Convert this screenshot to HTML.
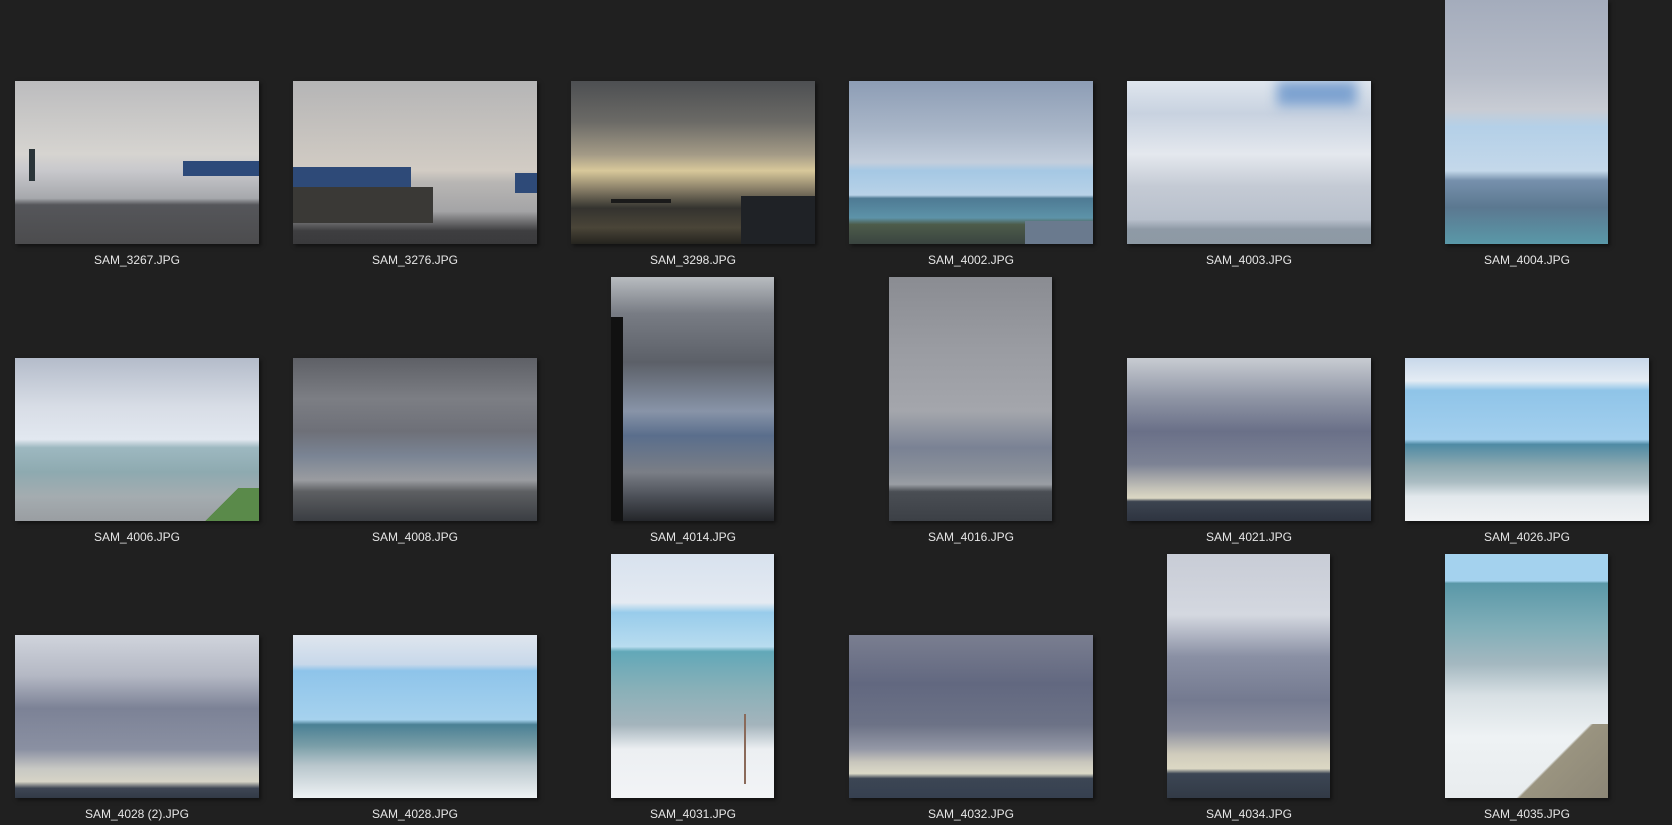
<!DOCTYPE html>
<html><head><meta charset="utf-8"><style>
html,body{margin:0;padding:0;background:#202020;width:1672px;height:825px;overflow:hidden;position:relative}
.t{position:absolute;box-shadow:2px 2px 4px rgba(0,0,0,.5);overflow:hidden}
.L{width:244px;height:163px}
.P{width:163px;height:244px}
.l{position:absolute;width:244px;text-align:center;font:12px "Liberation Sans",sans-serif;color:#e6e6e6;line-height:14px}
.t div{position:absolute}
</style></head><body>

<!-- Row 1 -->
<div class="t L" style="left:15px;top:81px;background:linear-gradient(#bcbcbe 0%,#d6d4d0 45%,#c8c8cc 55%,#a6a8ac 72%,#55565a 76%,#4c4c4e 100%)">
 <div style="left:168px;top:80px;width:76px;height:15px;background:#2d4a7a"></div>
 <div style="left:14px;top:68px;width:6px;height:32px;background:#2a3438"></div>
</div>
<div class="t L" style="left:293px;top:81px;background:linear-gradient(#b5b5b6 0%,#d2ccc4 55%,#b8b6b4 62%,#a4a4a6 80%,#3e3e40 92%,#3a3a3c 100%)">
 <div style="left:0;top:86px;width:118px;height:20px;background:#2e4a78"></div>
 <div style="left:0;top:106px;width:140px;height:36px;background:#3a3936"></div>
 <div style="left:222px;top:92px;width:22px;height:20px;background:#2e4a78"></div>
</div>
<div class="t L" style="left:571px;top:81px;background:linear-gradient(#4d4f52 0%,#6b6a66 25%,#a39a86 45%,#d8c89a 55%,#7d7460 68%,#34332f 78%,#4a4538 90%,#25241f 100%)">
 <div style="left:170px;top:115px;width:74px;height:48px;background:#1f2226"></div>
 <div style="left:40px;top:118px;width:60px;height:4px;background:#1a1a1a"></div>
</div>
<div class="t L" style="left:849px;top:81px;background:linear-gradient(#8d9db5 0%,#a9b6c8 30%,#c3cedc 50%,#a5c8e4 55%,#b8d2e8 70%,#4e7a94 72%,#5d93a8 84%,#4d5c4a 88%,#3a4440 100%)">
 <div style="left:176px;top:140px;width:68px;height:23px;background:#6a7a8e"></div>
</div>
<div class="t L" style="left:1127px;top:81px;background:linear-gradient(#dfe6ee 0%,#c8d2e0 20%,#e4e8ee 45%,#c4cad4 65%,#b8c0cc 85%,#8f9aa6 91%,#8d99a4 100%)">
 <div style="left:150px;top:0;width:80px;height:25px;background:#7da2d0;filter:blur(6px)"></div>
</div>
<div class="t P" style="left:1445px;top:0px;background:linear-gradient(#a4acbc 0%,#b6bcc8 30%,#c8ccd4 45%,#b4d0e8 52%,#c4d8ea 70%,#7690ac 74%,#5b7890 85%,#5a98a8 100%)"></div>

<div class="l" style="left:15px;top:253px">SAM_3267.JPG</div>
<div class="l" style="left:293px;top:253px">SAM_3276.JPG</div>
<div class="l" style="left:571px;top:253px">SAM_3298.JPG</div>
<div class="l" style="left:849px;top:253px">SAM_4002.JPG</div>
<div class="l" style="left:1127px;top:253px">SAM_4003.JPG</div>
<div class="l" style="left:1405px;top:253px">SAM_4004.JPG</div>

<!-- Row 2 -->
<div class="t L" style="left:15px;top:358px;background:linear-gradient(#b4bcca 0%,#d8dde6 30%,#e2e8f0 50%,#9db8c0 55%,#8eaab0 70%,#a4acb0 85%,#9a9ea2 100%)">
 <div style="left:170px;top:130px;width:74px;height:33px;background:linear-gradient(135deg,transparent 50%,#5a8a4a 50%)"></div>
</div>
<div class="t L" style="left:293px;top:358px;background:linear-gradient(#5e6066 0%,#7c7e84 25%,#6e7078 45%,#7a8494 60%,#9a9ca0 75%,#5d5f62 82%,#3a3d42 100%)"></div>
<div class="t P" style="left:611px;top:277px;background:linear-gradient(#b8bcc0 0%,#787c84 15%,#5c6068 35%,#8894a8 55%,#5a6e8c 65%,#7a7e86 80%,#4c5058 90%,#24262a 100%)">
 <div style="left:0;top:40px;width:12px;height:204px;background:#111"></div>
</div>
<div class="t P" style="left:889px;top:277px;background:linear-gradient(#8a8c92 0%,#9a9ca2 30%,#a4a6ac 55%,#7a8294 70%,#8a909a 80%,#9a9ea4 85%,#4a4e54 88%,#3c4046 100%)"></div>
<div class="t L" style="left:1127px;top:358px;background:linear-gradient(#c8ccd2 0%,#8e94a4 25%,#6a7088 45%,#7c8294 65%,#c4c2b8 80%,#dcd8c4 86%,#3c4450 88%,#2e3440 100%)"></div>
<div class="t L" style="left:1405px;top:358px;background:linear-gradient(#c8d8ea 0%,#e4ecf4 14%,#8fc4e8 20%,#a4d0ee 50%,#4e8aa4 53%,#8ca8b0 66%,#aabcc2 76%,#e2e8ec 85%,#f0f2f4 100%)"></div>

<div class="l" style="left:15px;top:530px">SAM_4006.JPG</div>
<div class="l" style="left:293px;top:530px">SAM_4008.JPG</div>
<div class="l" style="left:571px;top:530px">SAM_4014.JPG</div>
<div class="l" style="left:849px;top:530px">SAM_4016.JPG</div>
<div class="l" style="left:1127px;top:530px">SAM_4021.JPG</div>
<div class="l" style="left:1405px;top:530px">SAM_4026.JPG</div>

<!-- Row 3 -->
<div class="t L" style="left:15px;top:635px;background:linear-gradient(#d0d4dc 0%,#b4b8c4 25%,#7c8296 45%,#8a90a2 70%,#c8c8c4 82%,#d6d4c6 90%,#3e4654 94%,#323a46 100%)"></div>
<div class="t L" style="left:293px;top:635px;background:linear-gradient(#dfe6ee 0%,#c8d8ea 18%,#8ec4ea 22%,#a6d2ee 52%,#4a8094 55%,#7a9ea8 68%,#b8c6cc 80%,#eef2f4 100%)"></div>
<div class="t P" style="left:611px;top:554px;background:linear-gradient(#d8e2ee 0%,#e4eaf2 20%,#98cceb 24%,#b8dcef 38%,#62a8b8 40%,#88b0b8 55%,#a4b4bc 70%,#eceff2 80%,#f2f4f6 100%)">
 <div style="left:133px;top:160px;width:2px;height:70px;background:#8a6a5a"></div>
</div>
<div class="t L" style="left:849px;top:635px;background:linear-gradient(#7a7e90 0%,#626880 30%,#6c7286 55%,#9498a6 70%,#c8c6bc 78%,#dcdac8 85%,#3c4654 88%,#364050 100%)"></div>
<div class="t P" style="left:1167px;top:554px;background:linear-gradient(#c8ccd6 0%,#d4d8e0 25%,#8a90a4 42%,#747a90 60%,#8a8e9e 72%,#d0ccbc 82%,#dcd8c4 88%,#3c4654 90%,#323a46 100%)"></div>
<div class="t P" style="left:1445px;top:554px;background:linear-gradient(#a4d2ee 0%,#a4d2ee 11%,#5a98a8 12%,#80aeb8 30%,#a4b8c0 45%,#d8e0e4 58%,#eef2f4 75%,#e8ecee 100%)">
 <div style="left:70px;top:170px;width:93px;height:74px;background:linear-gradient(135deg,transparent 45%,#9a9480 47%,#8c8676 100%)"></div>
</div>

<div class="l" style="left:15px;top:807px">SAM_4028 (2).JPG</div>
<div class="l" style="left:293px;top:807px">SAM_4028.JPG</div>
<div class="l" style="left:571px;top:807px">SAM_4031.JPG</div>
<div class="l" style="left:849px;top:807px">SAM_4032.JPG</div>
<div class="l" style="left:1127px;top:807px">SAM_4034.JPG</div>
<div class="l" style="left:1405px;top:807px">SAM_4035.JPG</div>

</body></html>
